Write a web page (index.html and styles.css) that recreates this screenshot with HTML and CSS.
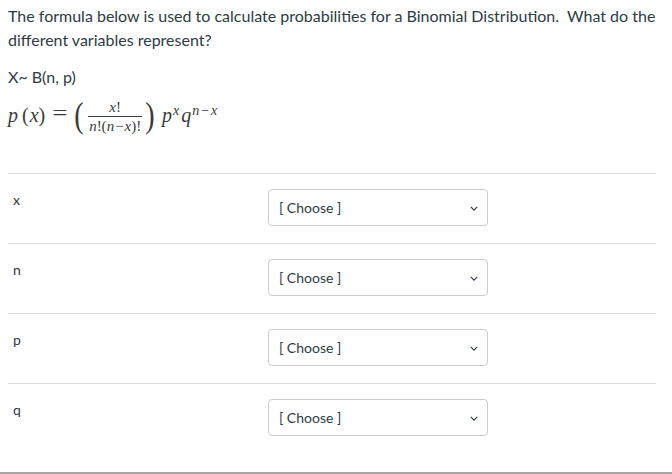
FILE: index.html
```html
<!DOCTYPE html>
<html>
<head>
<meta charset="utf-8">
<link rel="stylesheet" href="styles.css">
</head>
<body>
<div class="question">
  <div class="text">
    <p class="intro">The formula below is used to calculate probabilities for a Binomial Distribution.&nbsp; What do the different variables represent?</p>
    <p class="dist">X~ B(n, p)</p>
    <div class="formula"><span class="mi">p</span><span class="mo op">(</span><span class="mi">x</span><span class="mo">)</span><span class="eq">=</span><span class="bigparen">(</span><span class="frac"><span class="num"><span class="mi">x</span>!</span><span class="den"><span class="mi">n</span>!(<span class="mi">n</span><span class="minus">−</span><span class="mi">x</span>)!</span></span><span class="bigparen">)</span><span class="mi pp">p</span><span class="sup"><span class="mi">x</span></span><span class="mi qq">q</span><span class="sup"><span class="mi">n</span><span class="minus">−</span><span class="mi">x</span></span></div>
  </div>
  <div class="rows">
    <div class="row"><div class="label">x</div><div class="select"><span>[ Choose ]</span><svg class="chev" viewBox="0 0 10 6" width="8" height="5"><path d="M1 1 L5 5 L9 1" fill="none" stroke="#2d3b45" stroke-width="1.4"/></svg></div></div>
    <div class="row"><div class="label">n</div><div class="select"><span>[ Choose ]</span><svg class="chev" viewBox="0 0 10 6" width="8" height="5"><path d="M1 1 L5 5 L9 1" fill="none" stroke="#2d3b45" stroke-width="1.4"/></svg></div></div>
    <div class="row"><div class="label">p</div><div class="select"><span>[ Choose ]</span><svg class="chev" viewBox="0 0 10 6" width="8" height="5"><path d="M1 1 L5 5 L9 1" fill="none" stroke="#2d3b45" stroke-width="1.4"/></svg></div></div>
    <div class="row"><div class="label">q</div><div class="select"><span>[ Choose ]</span><svg class="chev" viewBox="0 0 10 6" width="8" height="5"><path d="M1 1 L5 5 L9 1" fill="none" stroke="#2d3b45" stroke-width="1.4"/></svg></div></div>
  </div>
</div>
</body>
</html>
```
FILE: styles.css
```css
html, body {
  margin: 0;
  padding: 0;
  background: #fff;
}
body {
  font-family: Lato, "Open Sans", sans-serif;
  color: #2d3b45;
  width: 672px;
  height: 474px;
  overflow: hidden;
}
.question {
  border-bottom: 2px solid #a5a5a5;
  height: 472px;
}
.text {
  padding: 4px 8px 0 8px;
}
.intro {
  margin: 0;
  font-size: 16px;
  line-height: 24px;
}
.dist {
  margin: 13px 0 0 0;
  font-size: 16px;
  line-height: 24px;
}
.formula {
  margin-top: 3px;
  height: 45px;
  line-height: 46px;
  white-space: nowrap;
  font-family: "Liberation Serif", "DejaVu Serif", serif;
  font-size: 20px;
  color: #3a3a3a;
}
.mi { font-style: italic; }
.op { margin-left: 4px; }
.mo + .mi { margin-left: 1px; }
.eq {
  display: inline-block;
  font-size: 27px;
  line-height: 20px;
  margin: 0 6px 0 7px;
  transform: scaleY(0.8);
}
.bigparen {
  display: inline-block;
  vertical-align: middle;
  font-size: 35px;
  line-height: 35px;
  font-weight: 100;
  transform: scaleX(0.8);
  margin-top: -4px;
}
.frac {
  display: inline-block;
  vertical-align: middle;
  text-align: center;
  font-size: 15px;
  line-height: 15px;
  margin: 0 2px 0 3px;
}
.num { display: block; padding: 0 2px 1px; border-bottom: 1px solid #3a3a3a; }
.den { display: block; padding: 2px 1px 0; }
.minus { margin: 0 1px; }
.pp { margin-left: 6px; }
.qq { margin-left: 1px; }
.sup {
  font-size: 14px;
  vertical-align: 7px;
  line-height: 0;
  margin-left: 1px;
  margin-right: 1px;
}
.sup .minus { margin: 0 2px; }
.rows {
  margin-top: 36px;
  padding: 0 16px 0 8px;
}
.row {
  border-top: 1px solid #dcdcdc;
  height: 69px;
  display: flex;
  align-items: flex-start;
}
.label {
  width: 260px;
  box-sizing: border-box;
  padding: 17px 0 0 5px;
  font-size: 14px;
  color: #2d3b45;
}
.select {
  margin-top: 15px;
  box-sizing: border-box;
  width: 220px;
  height: 37px;
  border: 1px solid #c7cdd1;
  border-radius: 4px;
  display: flex;
  align-items: center;
  justify-content: space-between;
  padding: 0 9px 0 10px;
  font-size: 14px;
  color: #2d3b45;
}
.chev { margin-top: 2px; }
```
